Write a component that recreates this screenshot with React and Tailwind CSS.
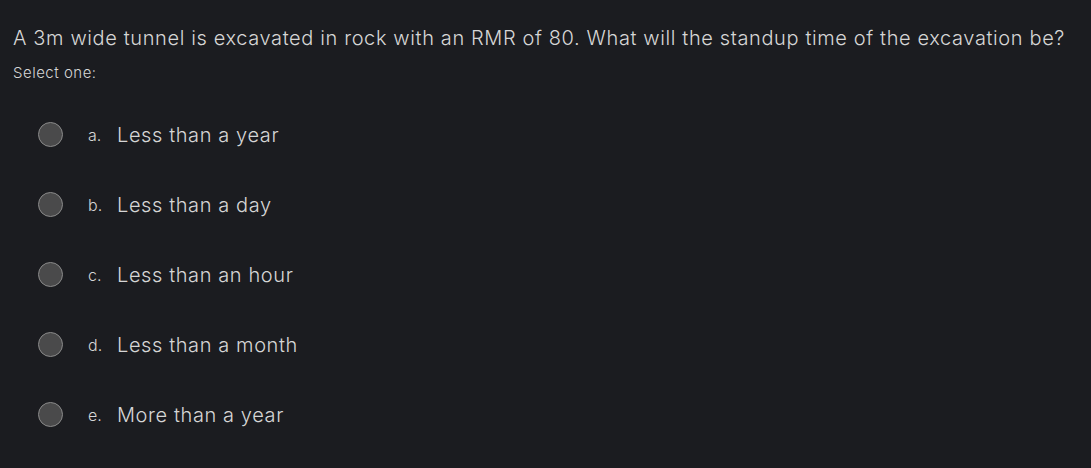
const OPTIONS = [
  { key: "a", label: "Less than a year" },
  { key: "b", label: "Less than a day" },
  { key: "c", label: "Less than an hour" },
  { key: "d", label: "Less than a month" },
  { key: "e", label: "More than a year" },
];

export default function App() {
  return (
    <div
      className="min-h-[468px] w-full bg-[#1b1c20] text-[#d6d6d6] font-light"
      style={{ fontFamily: "Inter, 'Open Sans', sans-serif" }}
    >
      <div className="px-[13px] pt-[25px]">
        <p className="text-[20px] leading-[26px] tracking-[0.62px]">
          A 3m wide tunnel is excavated in rock with an RMR of 80. What will the standup time of the excavation be?
        </p>
        <p className="mt-[13px] text-[15px] leading-[18px] tracking-[0.5px]">Select one:</p>
        <div className="mt-[40px] flex flex-col gap-[45px] pl-[25px]">
          {OPTIONS.map((opt) => (
            <label key={opt.key} className="flex h-[25px] items-center">
              <span className="h-[25px] w-[25px] shrink-0 rounded-full border border-[#8a8a8a] bg-[#4a4a4b]" />
              <span className="ml-[25px] w-[29px] text-[16px]">{opt.key}.</span>
              <span className="text-[20px] tracking-[0.6px]">{opt.label}</span>
            </label>
          ))}
        </div>
      </div>
    </div>
  );
}
